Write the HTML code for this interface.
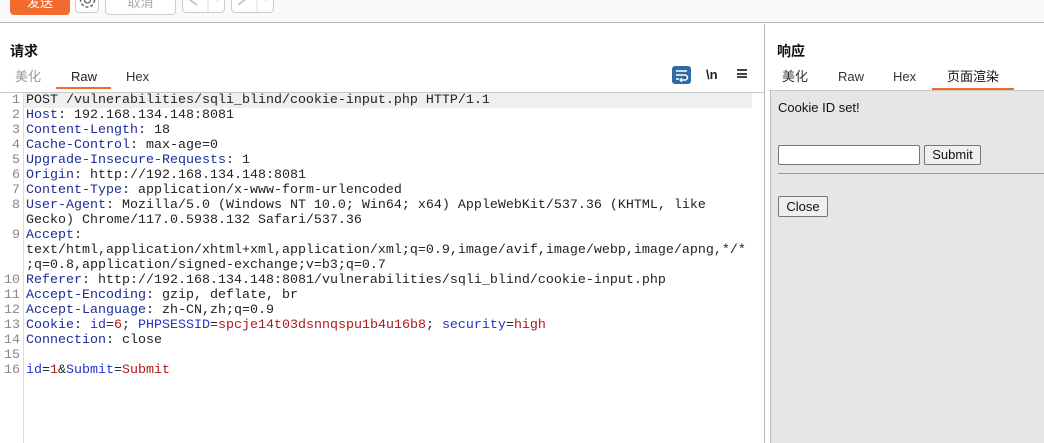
<!DOCTYPE html>
<html><head><meta charset="utf-8"><style>
*{margin:0;padding:0;box-sizing:border-box}
body{width:1044px;height:443px;overflow:hidden;background:#fff;font-family:"Liberation Sans","Noto Sans CJK SC",sans-serif;position:relative}
.abs{position:absolute}
.tb{left:0;top:0;width:1044px;height:23px;background:#fafafa;border-bottom:1px solid #b8b8b8}
.btn{position:absolute;border:1px solid #ccc;border-radius:4px;background:#fff;top:-8px;height:21px;overflow:hidden}
.h{font-size:14px;font-weight:bold;color:#111;line-height:16px}
.tab{font-size:13px;color:#333;position:absolute;line-height:16px;height:16px}
.code{font-family:"Liberation Mono",monospace;font-size:13.33px;line-height:15px;white-space:pre;color:#222}
.k{color:#1a2d9c}.r{color:#b01818}.b{color:#2233cc}
.ln{position:absolute;left:0;width:20px;text-align:right;font-family:"Liberation Mono",monospace;font-size:13.33px;line-height:15px;color:#888}
</style></head><body>
<div class="abs tb"></div>
<div class="btn" style="left:10px;width:60px;background:#f26a2e;border-color:#f26a2e;color:#fff;font-size:13px;text-align:center;line-height:16px;top:-6px">发送</div>
<div class="btn" style="left:75px;width:24px"><svg width="24" height="21" style="position:absolute;left:0;top:0"><circle cx="11.5" cy="7" r="7" fill="none" stroke="#666" stroke-width="1.5" stroke-dasharray="3 2"/><circle cx="11.5" cy="7" r="3" fill="none" stroke="#666" stroke-width="1.3"/></svg></div>
<div class="btn" style="left:105px;width:71px;color:#aaa;font-size:13px;text-align:center;line-height:16px;top:-6px">取消</div>
<div class="btn" style="left:182px;width:43px"><svg width="43" height="21" style="position:absolute;left:0;top:0"><path d="M14 0 L6 6 L14 12" fill="none" stroke="#bbb" stroke-width="1.5"/><line x1="25" y1="0" x2="25" y2="21" stroke="#ddd"/><path d="M31 4 L34 8 L37 4" fill="#bbb"/></svg></div>
<div class="btn" style="left:231px;width:43px"><svg width="43" height="21" style="position:absolute;left:0;top:0"><path d="M6 0 L14 6 L6 12" fill="none" stroke="#bbb" stroke-width="1.5"/><line x1="25" y1="0" x2="25" y2="21" stroke="#ddd"/><path d="M31 4 L34 8 L37 4" fill="#bbb"/></svg></div>
<div class="abs" style="left:764px;top:24px;width:1px;height:419px;background:#b8b8b8"></div>

<div class="abs h" style="left:10px;top:43px">请求</div>
<div class="tab" style="left:15px;top:69px;color:#999">美化</div>
<div class="tab" style="left:71px;top:69px;color:#222">Raw</div>
<div class="abs" style="left:56px;top:87px;width:55px;height:2px;background:#f26a2e"></div>
<div class="tab" style="left:126px;top:69px">Hex</div>
<div class="abs" style="left:672px;top:66px;width:19px;height:18px;background:#2f6aa3;border-radius:3px"><svg width="19" height="18"><path d="M4 5 H15 M4 9 H13 a2.5 2.5 0 0 1 0 5 H9 M4 13 H7" fill="none" stroke="#fff" stroke-width="1.5"/><path d="M10 12 L8 14 L10 16" fill="none" stroke="#fff" stroke-width="1.2"/></svg></div>
<div class="abs" style="left:706px;top:67px;font-size:13px;font-weight:bold;color:#222">\n</div>
<div class="abs" style="left:737px;top:69px;width:10px;height:9px;border-top:2px solid #444;border-bottom:2px solid #444"><div style="margin-top:1.5px;height:2px;background:#444"></div></div>
<div class="abs" style="left:0;top:92px;width:764px;height:1px;background:#c8c8c8"></div>
<div class="abs" style="left:23px;top:93px;width:1px;height:350px;background:#ddd"></div>
<div class="abs" style="left:24px;top:93px;width:728px;height:15px;background:#efefef"></div>
<div class="ln" style="top:93px">1<br>2<br>3<br>4<br>5<br>6<br>7<br>8<br><br>9<br><br><br>10<br>11<br>12<br>13<br>14<br>15<br>16</div>
<div class="abs code" style="left:26px;top:93px">POST /vulnerabilities/sqli_blind/cookie-input.php HTTP/1.1
<span class="k">Host</span>: 192.168.134.148:8081
<span class="k">Content-Length</span>: 18
<span class="k">Cache-Control</span>: max-age=0
<span class="k">Upgrade-Insecure-Requests</span>: 1
<span class="k">Origin</span>: http://192.168.134.148:8081
<span class="k">Content-Type</span>: application/x-www-form-urlencoded
<span class="k">User-Agent</span>: Mozilla/5.0 (Windows NT 10.0; Win64; x64) AppleWebKit/537.36 (KHTML, like
Gecko) Chrome/117.0.5938.132 Safari/537.36
<span class="k">Accept</span>:
text/html,application/xhtml+xml,application/xml;q=0.9,image/avif,image/webp,image/apng,*/*
;q=0.8,application/signed-exchange;v=b3;q=0.7
<span class="k">Referer</span>: http://192.168.134.148:8081/vulnerabilities/sqli_blind/cookie-input.php
<span class="k">Accept-Encoding</span>: gzip, deflate, br
<span class="k">Accept-Language</span>: zh-CN,zh;q=0.9
<span class="k">Cookie</span>: <span class="b">id</span>=<span class="r">6</span>; <span class="b">PHPSESSID</span>=<span class="r">spcje14t03dsnnqspu1b4u16b8</span>; <span class="b">security</span>=<span class="r">high</span>
<span class="k">Connection</span>: close

<span class="b">id</span>=<span class="r">1</span>&amp;<span class="b">Submit</span>=<span class="r">Submit</span></div>

<div class="abs h" style="left:777px;top:43px">响应</div>
<div class="tab" style="left:782px;top:69px">美化</div>
<div class="tab" style="left:838px;top:69px">Raw</div>
<div class="tab" style="left:893px;top:69px">Hex</div>
<div class="tab" style="left:947px;top:69px;color:#111">页面渲染</div>
<div class="abs" style="left:932px;top:88px;width:82px;height:2px;background:#f26a2e"></div>
<div class="abs" style="left:767px;top:90px;width:277px;height:353px;background:#e6e6e6;border-top:1px solid #c8c8c8;border-left:3px solid #fff;box-shadow:inset 1px 0 0 #bbb"></div>
<div class="abs" style="left:778px;top:100px;font-size:13px;color:#111">Cookie ID set!</div>
<div class="abs" style="left:778px;top:145px;width:142px;height:20px;background:#fff;border:1px solid #777;border-radius:2px"></div>
<div class="abs" style="left:924px;top:145px;width:57px;height:20px;background:#efefef;border:1px solid #777;border-radius:2px;font-size:13px;text-align:center;line-height:18px;color:#111">Submit</div>
<div class="abs" style="left:778px;top:173px;width:266px;height:1px;background:#999"></div>
<div class="abs" style="left:778px;top:196px;width:50px;height:21px;background:#efefef;border:1px solid #777;border-radius:2px;font-size:13px;text-align:center;line-height:19px;color:#111">Close</div>
</body></html>
